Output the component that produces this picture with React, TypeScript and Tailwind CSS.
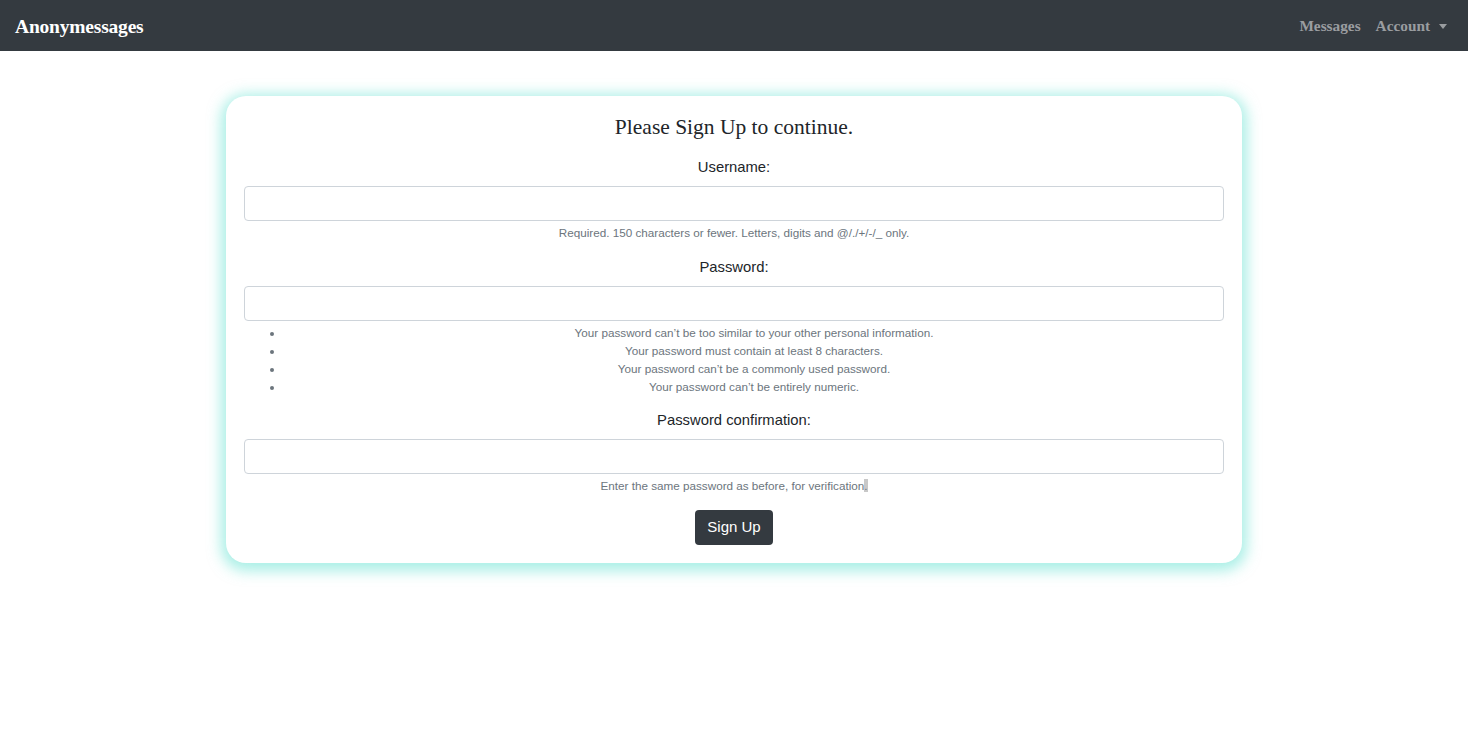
import React from "react";

const serif = { fontFamily: '"Liberation Serif", "DejaVu Serif", serif' };

function HelpText({ children }: { children: React.ReactNode }) {
  return <div className="text-[11.7px] leading-4 text-[#6c757d] text-center">{children}</div>;
}

function Field({ label }: { label: string }) {
  return (
    <>
      <label className="block text-center text-[14.8px] leading-6 text-[#212529]">{label}</label>
      <input
        type="text"
        className="mt-[7px] block w-full h-[35px] rounded-[4px] border border-[#ced4da] bg-white px-3 outline-none"
      />
    </>
  );
}

export default function App() {
  return (
    <div className="min-h-[734px] bg-white" style={{ fontFamily: '"Liberation Sans", Arial, sans-serif' }}>
      <nav className="h-[51px] bg-[#343a40] flex items-center justify-between pl-[15px] pr-[21px] pt-[2px]">
        <span className="text-white font-bold text-[19.5px] tracking-[-0.2px]" style={serif}>
          Anonymessages
        </span>
        <div className="flex items-center gap-[15px] text-[15.3px] font-bold text-[#9a9da0]" style={serif}>
          <span>Messages</span>
          <span className="flex items-center">
            Account
            <span className="ml-[9px] inline-block w-0 h-0 border-l-[4.5px] border-r-[4.5px] border-t-[5px] border-l-transparent border-r-transparent border-t-[#9a9da0]" />
          </span>
        </div>
      </nav>

      <div className="mt-[45px] mx-auto w-[1016px] rounded-[20px] bg-white px-[18px] pt-[18px] pb-[18px] shadow-[0_3px_14px_5px_rgba(100,226,210,0.55)]">
        <h1 className="text-center text-[21.5px] leading-[26px] text-[#212529]" style={serif}>
          Please Sign Up to continue.
        </h1>
        <div className="mt-[15px]">
          <Field label="Username:" />
          <div className="mt-[4px]">
            <HelpText>Required. 150 characters or fewer. Letters, digits and @/./+/-/_ only.</HelpText>
          </div>
        </div>
        <div className="mt-[14px]">
          <Field label="Password:" />
          <ul className="mt-[3px] list-disc pl-[40px] text-[11.7px] leading-[18px] text-[#6c757d] text-center marker:text-[#6c757d]">
            <li>Your password can’t be too similar to your other personal information.</li>
            <li>Your password must contain at least 8 characters.</li>
            <li>Your password can’t be a commonly used password.</li>
            <li>Your password can’t be entirely numeric.</li>
          </ul>
        </div>
        <div className="mt-[12px]">
          <Field label="Password confirmation:" />
          <div className="mt-[4px]">
            <HelpText>
              Enter the same password as before, for verification<span className="bg-[#c8c8c8]">.</span>
            </HelpText>
          </div>
        </div>
        <div className="mt-[16px] flex justify-center">
          <button className="h-[35px] px-3 rounded-[4px] bg-[#343a40] text-white text-[15px]">Sign Up</button>
        </div>
      </div>
    </div>
  );
}
